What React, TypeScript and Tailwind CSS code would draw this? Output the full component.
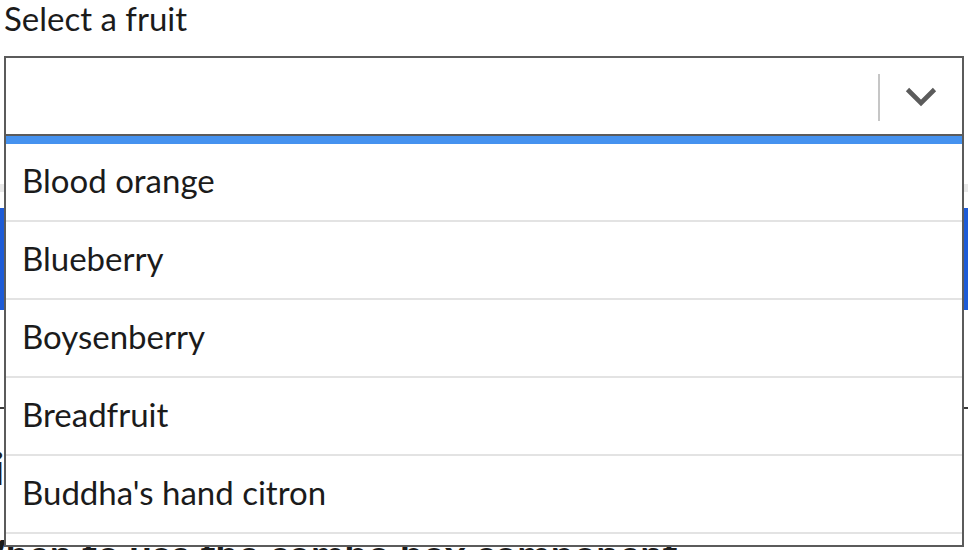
import React, { useState } from 'react';

const fruits = [
  'Blood orange',
  'Blueberry',
  'Boysenberry',
  'Breadfruit',
  "Buddha's hand citron",
  'Cantaloupe',
  'Cherimoya',
];

const ChevronDown: React.FC = () => (
  <svg width="32" height="20" viewBox="0 0 32 20" fill="none" aria-hidden="true">
    <polyline
      points="2.5,2.5 16,16 29.5,2.5"
      stroke="#5b5b5b"
      strokeWidth="4.6"
      strokeLinejoin="miter"
      fill="none"
    />
  </svg>
);

export default function App() {
  const [value, setValue] = useState('');
  const [open] = useState(true);

  return (
    <div
      className="h-[550px] w-[968px] overflow-hidden bg-white px-[4px] text-[#1b1b1b]"
      style={{ fontFamily: 'Lato, "Noto Sans", sans-serif' }}
    >
      <label htmlFor="fruit" className="block h-[36px] text-[33px] leading-[36px]">
        Select a fruit
      </label>

      {/* Combo box */}
      <div className="relative mt-[20px]">
        <div className="flex h-[80px] items-center border-2 border-[#5b5b5b] bg-white">
          <input
            id="fruit"
            value={value}
            onChange={(e) => setValue(e.target.value)}
            className="h-full min-w-0 flex-1 bg-transparent px-[16px] text-[33px] outline-none"
          />
          <span className="mt-[3px] h-[47px] w-[2px] bg-[#c6c6c6]" />
          <button className="flex h-full w-[82px] items-center justify-center pt-[2px]">
            <ChevronDown />
          </button>
        </div>

        {open && (
          <ul className="absolute left-0 right-0 top-full z-10 h-[411px] overflow-hidden border-2 border-t-0 border-[#5b5b5b] bg-white">
            <li className="h-[8px] bg-[#4592ef]" />
            {fruits.map((f) => (
              <li
                key={f}
                className="h-[78px] border-b-2 border-[#e3e3e3] pl-[16px] text-[33px] leading-[72px]"
              >
                {f}
              </li>
            ))}
          </ul>
        )}
      </div>

      {/* Page content underneath the open list */}
      <div className="-mx-[4px]">
        <div className="mt-[48px] h-[8px] bg-[#e9e9e9]" />
        <div className="mt-[16px] h-[102px] bg-[#1d5bd6]" />
        <div className="mt-[97px] h-[2px] bg-[#3a3a3a]" />
        <p className="-ml-[7px] mt-[37px] h-[44px] text-[44px] font-bold leading-[44px]">in</p>
        <h2 className="-ml-[36px] mt-[40px] whitespace-nowrap text-[40px] font-bold leading-[48px]">
          When to use the combo box component
        </h2>
      </div>
    </div>
  );
}
